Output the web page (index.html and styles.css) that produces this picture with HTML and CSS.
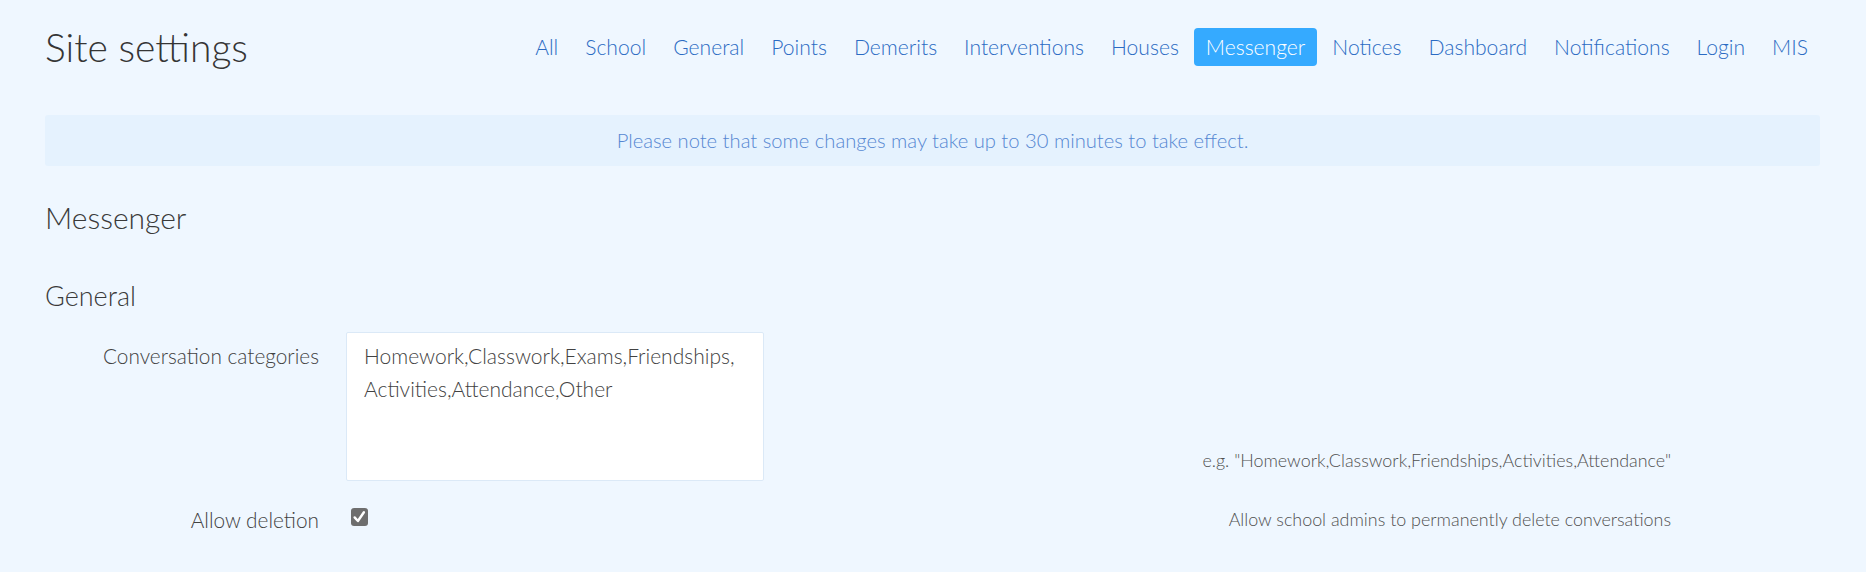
FILE: index.html
```html
<!DOCTYPE html>
<html lang="en">
<head>
<meta charset="utf-8">
<title>Site settings</title>
<link rel="stylesheet" href="styles.css">
</head>
<body>
<div class="page">
  <header class="topbar">
    <h1 class="title">Site settings</h1>
    <nav class="tabs">
      <a class="tab" href="#">All</a>
      <a class="tab" href="#">School</a>
      <a class="tab" href="#">General</a>
      <a class="tab" href="#">Points</a>
      <a class="tab" href="#">Demerits</a>
      <a class="tab" href="#">Interventions</a>
      <a class="tab" href="#">Houses</a>
      <a class="tab active" href="#">Messenger</a>
      <a class="tab" href="#">Notices</a>
      <a class="tab" href="#">Dashboard</a>
      <a class="tab" href="#">Notifications</a>
      <a class="tab" href="#">Login</a>
      <a class="tab" href="#">MIS</a>
    </nav>
  </header>

  <div class="alert">Please note that some changes may take up to 30 minutes to take effect.</div>

  <h2 class="section-title">Messenger</h2>
  <h3 class="group-title">General</h3>

  <form class="settings">
    <div class="row">
      <label class="row-label" for="cats">Conversation categories</label>
      <div class="row-field">
        <textarea id="cats" class="textarea">Homework,Classwork,Exams,Friendships,
Activities,Attendance,Other</textarea>
      </div>
      <div class="row-help row-help-bottom">e.g. "Homework,Classwork,Friendships,Activities,Attendance"</div>
    </div>
    <div class="row row-check">
      <label class="row-label">Allow deletion</label>
      <div class="row-field">
        <span class="checkbox" role="checkbox" aria-checked="true">
          <svg viewBox="0 0 17 18" width="17" height="18"><path d="M3.6 9.4 L6.9 13 L12.9 4.2" fill="none" stroke="#fff" stroke-width="2.4" stroke-linecap="round" stroke-linejoin="round"/></svg>
        </span>
      </div>
      <div class="row-help row-help-top">Allow school admins to permanently delete conversations</div>
    </div>
  </form>
</div>
</body>
</html>
```

FILE: styles.css
```css
html, body {
  margin: 0;
  padding: 0;
  background: #eff7ff;
}

body {
  font-family: Lato, "Open Sans", "Liberation Sans", sans-serif;
  font-weight: 300;
  color: #444;
}

.page {
  padding: 28px 46px 40px 45px;
}

.topbar {
  display: flex;
  justify-content: space-between;
  align-items: center;
  height: 38px;
}

.title {
  margin: 0;
  font-size: 39px;
  font-weight: 300;
  line-height: 38px;
  color: #353535;
}

.tabs {
  display: flex;
  align-items: center;
  gap: 3px;
}

.tab {
  display: block;
  padding: 0 12px;
  height: 38px;
  line-height: 38px;
  font-size: 21.1px;
  font-weight: 300;
  color: #2b6bc3;
  text-decoration: none;
  border-radius: 4px;
}

.tab.active {
  background: #35aaff;
  color: #fff;
}

.alert {
  margin-top: 49px;
  height: 51px;
  line-height: 51px;
  background: #e5f2fe;
  border-radius: 3px;
  text-align: center;
  font-size: 20.2px;
  color: #5587d2;
}

.section-title {
  margin: 32px 0 0;
  font-size: 30px;
  line-height: 38px;
  font-weight: 300;
  color: #3a3a3a;
}

.group-title {
  margin: 43px 0 0;
  font-size: 27px;
  line-height: 34px;
  font-weight: 300;
  color: #3a3a3a;
}

.settings {
  margin-top: 19px;
}

.row {
  display: grid;
  grid-template-columns: 301px 418px 907px;
}

.row-check {
  margin-top: 15px;
}

.row-label {
  padding: 7px 27px 0 0;
  text-align: right;
  font-size: 20.8px;
  line-height: 33px;
  color: #424242;
}

.textarea {
  display: block;
  box-sizing: border-box;
  width: 418px;
  height: 149px;
  margin: 0;
  padding: 6px 17px;
  border: 1px solid #dbe9f7;
  border-radius: 2px;
  background: #fff;
  font-family: Lato, "Open Sans", "Liberation Sans", sans-serif;
  font-weight: 300;
  font-size: 21px;
  line-height: 33px;
  color: #424242;
  resize: none;
  outline: none;
}

.row-help {
  display: flex;
  justify-content: flex-end;
  font-size: 17.9px;
  line-height: 24px;
  color: #505050;
}

.row-help-bottom {
  align-items: flex-end;
  padding-bottom: 9px;
}

.row-help-top {
  align-items: flex-start;
  padding-top: 11px;
}

.row-check .row-field {
  padding: 12px 0 0 5px;
}

.checkbox {
  display: block;
  width: 17px;
  height: 18px;
  background: #6e6e6e;
  border-radius: 3px;
}

.checkbox svg {
  display: block;
}
```
